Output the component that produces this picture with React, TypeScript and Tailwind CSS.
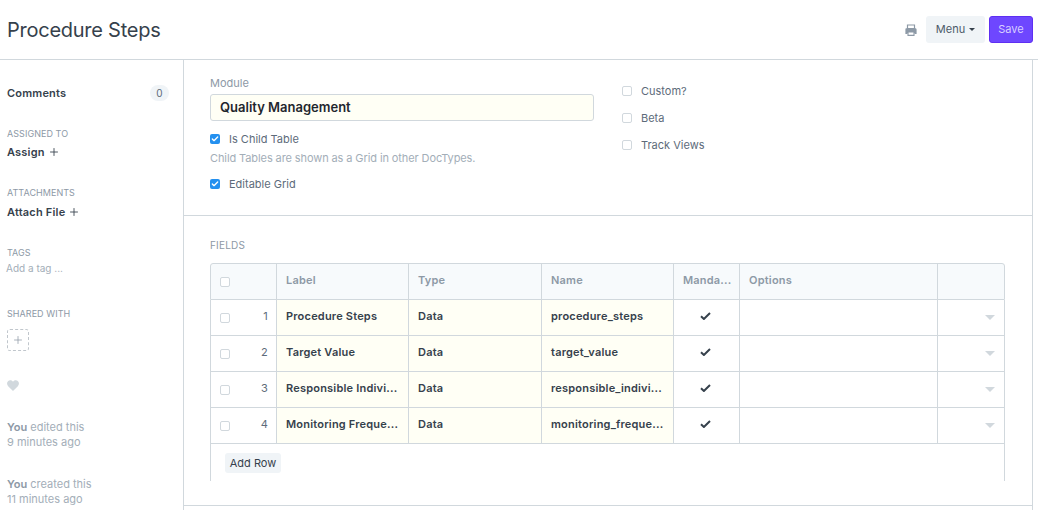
import React from 'react';
import { Check, Plus } from 'lucide-react';

const rows = [
  { idx: 1, label: 'Procedure Steps', name: 'procedure_steps' },
  { idx: 2, label: 'Target Value', name: 'target_value' },
  { idx: 3, label: 'Responsible Indivi...', name: 'responsible_indivi...' },
  { idx: 4, label: 'Monitoring Freque...', name: 'monitoring_freque...' },
];

const gridCols = 'grid grid-cols-[65px_132px_133px_132px_66px_198px_67px]';

function Box({ checked = false }: { checked?: boolean }) {
  if (checked) {
    return (
      <span className="flex h-[10px] w-[10px] items-center justify-center rounded-[2px] bg-[#2490ef]">
        <Check className="h-[8px] w-[8px] text-white" strokeWidth={4} />
      </span>
    );
  }
  return <span className="block h-[10px] w-[10px] rounded-[2px] border border-[#d1d8dd] bg-white" />;
}

function CheckRow({ label, checked }: { label: string; checked?: boolean }) {
  return (
    <div className="flex h-[14px] items-center gap-[9px] text-[11px] leading-[14px] text-[#5d6b7a]">
      <Box checked={checked} />
      <span>{label}</span>
    </div>
  );
}

function SideLabel({ children }: { children: React.ReactNode }) {
  return <div className="text-[9px] leading-[12px] tracking-[0.05px] text-[#8d99a6]">{children}</div>;
}

function SideAction({ label, top = 'mt-[5px]' }: { label: string; top?: string }) {
  return (
    <div className={`${top} flex items-center gap-[3px] text-[11px] leading-[14px] font-semibold tracking-[0.2px] text-[#36414c]`}>
      {label}
      <Plus className="h-[12px] w-[12px]" strokeWidth={1.75} />
    </div>
  );
}

function Sidebar() {
  return (
    <aside className="w-[184px] shrink-0 border-r border-[#d1d8dd] pt-[25px] pl-[7px] pr-[14px]">
      <div className="flex h-[16px] items-center justify-between text-[11px] font-semibold tracking-[0.2px] text-[#36414c]">
        Comments
        <span className="flex h-[16px] w-[19px] items-center justify-center rounded-full bg-[#f0f4f7] text-[10px] font-normal text-[#5d6b7a]">0</span>
      </div>
      <div className="mt-[27px]">
        <SideLabel>ASSIGNED TO</SideLabel>
        <SideAction label="Assign" />
      </div>
      <div className="mt-[28px]">
        <SideLabel>ATTACHMENTS</SideLabel>
        <SideAction label="Attach File" top="mt-[6px]" />
      </div>
      <div className="mt-[28px]">
        <SideLabel>TAGS</SideLabel>
        <div className="mt-[2px] -ml-px text-[10px] leading-[14px] text-[#a3aeb8]">Add a tag ...</div>
      </div>
      <div className="mt-[33px]">
        <SideLabel>SHARED WITH</SideLabel>
        <div className="mt-[9px] flex h-[22px] w-[22px] items-center justify-center rounded-[3px] border border-dashed border-[#c0c6cc] text-[#8d99a6]">
          <Plus className="h-[12px] w-[12px]" strokeWidth={1.5} />
        </div>
      </div>
      <svg className="mt-[29px] block" width="12" height="11" viewBox="0 0 24 22">
        <path d="M12 22 2.3 12.3C-.6 9.4-.6 5 2 2.3 4.6-.3 9-.3 12 3.4 15-.3 19.4-.3 22 2.3c2.6 2.7 2.6 7.1-.3 10z" fill="#d1d8dd" />
      </svg>
      <div className="mt-[29px] text-[11px] leading-[15px] text-[#a3aeb8]">
        <div><span className="font-semibold text-[#8d99a6]">You</span> edited this</div>
        <div>9 minutes ago</div>
      </div>
      <div className="mt-[27px] text-[11px] leading-[15px] text-[#a3aeb8]">
        <div><span className="font-semibold text-[#8d99a6]">You</span> created this</div>
        <div>11 minutes ago</div>
      </div>
    </aside>
  );
}

function FieldsTable() {
  return (
    <div className="w-[795px] text-[11px] tracking-[0.2px]">
      <div className={`${gridCols} h-[37px] rounded-t-[3px] border border-[#d1d8dd] bg-[#f7fafc] font-semibold text-[#8d99a6]`}>
        <div className="flex items-center pl-[9px]"><Box /></div>
        {['Label', 'Type', 'Name', 'Manda...', 'Options', ''].map((head, i) => (
          <div key={i} className="flex items-center border-l border-[#d1d8dd] pb-[2px] pl-[9px]">{head}</div>
        ))}
      </div>
      {rows.map(row => (
        <div key={row.idx} className={`${gridCols} h-[36px] border-x border-b border-[#d1d8dd] font-semibold text-[#36414c]`}>
          <div className="flex items-center justify-between pr-[8px] pl-[9px] font-normal text-[#5d6b7a]">
            <Box />
            <span className="pb-[2px]">{row.idx}</span>
          </div>
          <div className="flex items-center border-l border-[#d1d8dd] bg-[#fffff5] pb-[2px] pl-[9px] whitespace-nowrap">{row.label}</div>
          <div className="flex items-center border-l border-[#d1d8dd] bg-[#fffff5] pb-[2px] pl-[9px]">Data</div>
          <div className="flex items-center border-l border-[#d1d8dd] bg-[#fffff5] pb-[2px] pl-[9px] whitespace-nowrap">{row.name}</div>
          <div className="flex items-center justify-center border-l border-[#d1d8dd] pr-[3px] pb-[3px]">
            <svg width="11" height="8" viewBox="0 0 11 8" fill="none">
              <path d="M1 4.2 3.9 7 10 1" stroke="#36414c" strokeWidth="2" />
            </svg>
          </div>
          <div className="border-l border-[#d1d8dd]" />
          <div className="flex items-center justify-end border-l border-[#d1d8dd] pr-[9px]">
            <span className="h-0 w-0 border-x-[5px] border-t-[5px] border-x-transparent border-t-[#d1d8dd]" />
          </div>
        </div>
      ))}
      <div className="h-[37px] border-x border-[#d1d8dd] pt-[9px] pl-[14px]">
        <button className="flex h-[20px] w-[56px] items-center justify-center rounded-[3px] bg-[#f0f4f7] text-[11px] font-normal tracking-normal text-[#36414c]">Add Row</button>
      </div>
    </div>
  );
}

export default function App() {
  return (
    <div className="h-[510px] w-[1038px] overflow-hidden bg-white font-['Inter',sans-serif]">
      <header className="flex h-[60px] items-center justify-between border-b border-[#d1d8dd] pr-[5px] pl-[7px]">
        <h1 className="text-[20px] font-normal tracking-[-0.25px] text-[#36414c]">Procedure Steps</h1>
        <div className="flex items-center">
          <svg className="mr-[9px]" width="12" height="12" viewBox="0 0 12 12" fill="none">
            <path d="M2.5 5V1h7v4M2.5 9.5H1V5.5a1 1 0 0 1 1-1h8a1 1 0 0 1 1 1v4H9.5" stroke="#8d99a6" strokeWidth="1.2" />
            <path d="M1 5h10v4H1z" fill="#8d99a6" />
            <path d="M3 8h6v3.4H3z" fill="#fff" stroke="#8d99a6" strokeWidth="1.1" />
          </svg>
          <button className="flex h-[27px] w-[59px] items-center justify-center gap-[4px] rounded-[3px] bg-[#f0f4f7] text-[11px] text-[#4c5a67]">
            Menu
            <span className="h-0 w-0 border-x-[3px] border-t-[3px] border-x-transparent border-t-[#36414c]" />
          </button>
          <button className="ml-[4px] h-[27px] w-[44px] rounded-[3px] border border-[#5e2ff2] bg-[#6e47ff] text-[11px] text-[#d8cfff]">Save</button>
        </div>
      </header>
      <div className="flex h-[450px]">
        <Sidebar />
        <main className="w-[849px] border-r border-[#d1d8dd]">
          <section className="flex h-[156px] border-b border-[#d1d8dd] pt-[16px] pl-[26px]">
            <div className="w-[384px]">
              <div className="text-[11px] leading-[14px] text-[#8d99a6]">Module</div>
              <div className="mt-[4px] flex h-[27px] items-center rounded-[3px] border border-[#d1d8dd] bg-[#fffff5] pl-[9px] text-[13px] font-semibold text-[#1f272e]">Quality Management</div>
              <div className="mt-[11px]"><CheckRow label="Is Child Table" checked /></div>
              <div className="mt-[5px] text-[11px] leading-[14px] tracking-[-0.1px] text-[#a3aeb8]">Child Tables are shown as a Grid in other DocTypes.</div>
              <div className="mt-[12px]"><CheckRow label="Editable Grid" checked /></div>
            </div>
            <div className="ml-[28px] flex flex-col gap-[13px] pt-[8px]">
              <CheckRow label="Custom?" />
              <CheckRow label="Beta" />
              <CheckRow label="Track Views" />
            </div>
          </section>
          <section className="h-[290px] border-b border-[#d1d8dd] pt-[23px] pl-[26px]">
            <div className="mb-[12px] text-[10px] leading-[12px] tracking-[0.2px] text-[#8d99a6]">FIELDS</div>
            <FieldsTable />
          </section>
        </main>
      </div>
    </div>
  );
}
